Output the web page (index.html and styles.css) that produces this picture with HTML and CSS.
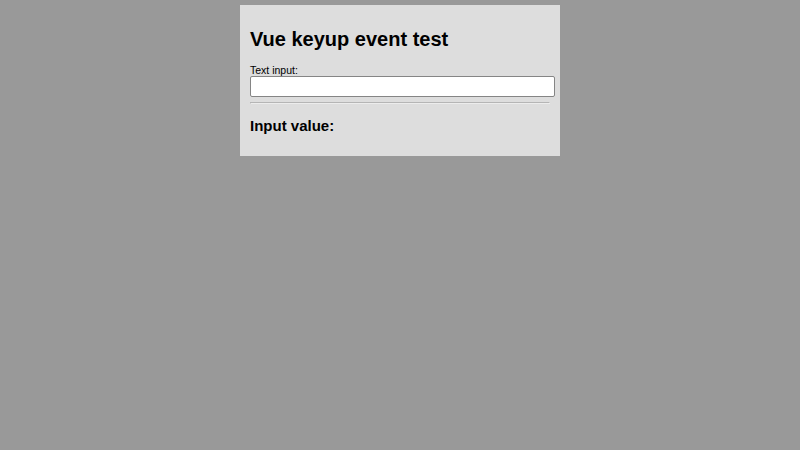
FILE: index.html
```html
<html lang="en">
<head>
    <meta charset="UTF-8">
    <meta name="viewport" content="width=device-width, initial-scale=1.0">
    <title>Vue keyup event test</title>
    <link rel="stylesheet" href="styles.css">
</head>
<body>
    <div id="app" class="container">
        <h1>Vue keyup event test</h1>

        <label class="field-label" for="textInput">Text input:</label>
        <input id="textInput" class="text-input" type="text">

        <hr>

        <h2>Input value: <span id="inputValue"></span></h2>
    </div>
</body>
</html>
```

FILE: styles.css
```css
body {
    margin: 0;
    background-color: #999;
    font-family: "Liberation Sans", Arial, sans-serif;
    font-size: 10px;
}
.container {
    width: 300px;
    margin: 5px auto;
    padding: 10px;
    background-color: #ddd;
}
h1 {
    font-size: 20px;
    margin: 13.4px 0;
}
h2 {
    font-size: 15px;
    margin: 12.45px 0;
}
.field-label {
    display: block;
    font-size: 10.5px;
    line-height: 11.5px;
}
.text-input {
    display: block;
    box-sizing: border-box;
    width: 305px;
    height: 21px;
    padding: 1px 2px;
    border: 1px solid #858585;
    border-radius: 2px;
    background: white;
    font-size: 13.33px;
}
hr {
    margin: 5px 0;
    border-style: solid;
    border-width: 1px;
    border-color: #b5b5b5 #ececec #ececec #b5b5b5;
}
```
